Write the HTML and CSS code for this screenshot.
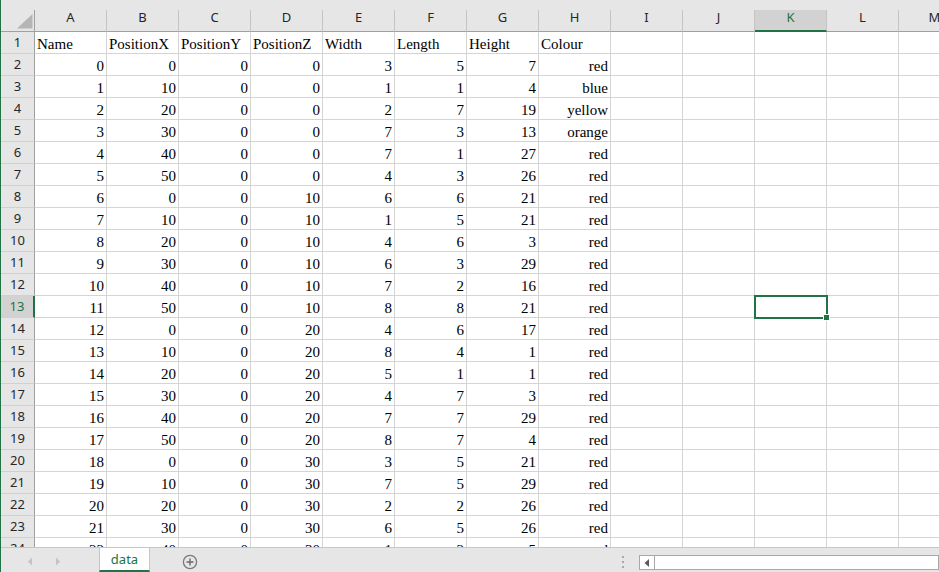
FILE: index.html
```html
<!DOCTYPE html>
<html>
<head>
<meta charset="utf-8">
<title>data</title>
<link rel="stylesheet" href="styles.css">
</head>
<body>
<div class="app">
  <div class="sheet">
    <div class="grid">
      <div class="corner"><svg width="33" height="21" viewBox="0 0 33 21"><polygon points="31.5,4 31.5,18.5 16,18.5" fill="#b5b5b5"/></svg></div>
      <div class="ch">A</div><div class="ch">B</div><div class="ch">C</div><div class="ch">D</div><div class="ch">E</div><div class="ch">F</div><div class="ch">G</div><div class="ch">H</div><div class="ch">I</div><div class="ch">J</div><div class="ch on">K</div><div class="ch">L</div><div class="ch">M</div>

      <div class="rh">1</div><div class="c">Name</div><div class="c">PositionX</div><div class="c">PositionY</div><div class="c">PositionZ</div><div class="c">Width</div><div class="c">Length</div><div class="c">Height</div><div class="c">Colour</div><div class="c"></div><div class="c"></div><div class="c"></div><div class="c"></div><div class="c"></div>
      <div class="rh">2</div><div class="c n">0</div><div class="c n">0</div><div class="c n">0</div><div class="c n">0</div><div class="c n">3</div><div class="c n">5</div><div class="c n">7</div><div class="c n">red</div><div class="c"></div><div class="c"></div><div class="c"></div><div class="c"></div><div class="c"></div>
      <div class="rh">3</div><div class="c n">1</div><div class="c n">10</div><div class="c n">0</div><div class="c n">0</div><div class="c n">1</div><div class="c n">1</div><div class="c n">4</div><div class="c n">blue</div><div class="c"></div><div class="c"></div><div class="c"></div><div class="c"></div><div class="c"></div>
      <div class="rh">4</div><div class="c n">2</div><div class="c n">20</div><div class="c n">0</div><div class="c n">0</div><div class="c n">2</div><div class="c n">7</div><div class="c n">19</div><div class="c n">yellow</div><div class="c"></div><div class="c"></div><div class="c"></div><div class="c"></div><div class="c"></div>
      <div class="rh">5</div><div class="c n">3</div><div class="c n">30</div><div class="c n">0</div><div class="c n">0</div><div class="c n">7</div><div class="c n">3</div><div class="c n">13</div><div class="c n">orange</div><div class="c"></div><div class="c"></div><div class="c"></div><div class="c"></div><div class="c"></div>
      <div class="rh">6</div><div class="c n">4</div><div class="c n">40</div><div class="c n">0</div><div class="c n">0</div><div class="c n">7</div><div class="c n">1</div><div class="c n">27</div><div class="c n">red</div><div class="c"></div><div class="c"></div><div class="c"></div><div class="c"></div><div class="c"></div>
      <div class="rh">7</div><div class="c n">5</div><div class="c n">50</div><div class="c n">0</div><div class="c n">0</div><div class="c n">4</div><div class="c n">3</div><div class="c n">26</div><div class="c n">red</div><div class="c"></div><div class="c"></div><div class="c"></div><div class="c"></div><div class="c"></div>
      <div class="rh">8</div><div class="c n">6</div><div class="c n">0</div><div class="c n">0</div><div class="c n">10</div><div class="c n">6</div><div class="c n">6</div><div class="c n">21</div><div class="c n">red</div><div class="c"></div><div class="c"></div><div class="c"></div><div class="c"></div><div class="c"></div>
      <div class="rh">9</div><div class="c n">7</div><div class="c n">10</div><div class="c n">0</div><div class="c n">10</div><div class="c n">1</div><div class="c n">5</div><div class="c n">21</div><div class="c n">red</div><div class="c"></div><div class="c"></div><div class="c"></div><div class="c"></div><div class="c"></div>
      <div class="rh">10</div><div class="c n">8</div><div class="c n">20</div><div class="c n">0</div><div class="c n">10</div><div class="c n">4</div><div class="c n">6</div><div class="c n">3</div><div class="c n">red</div><div class="c"></div><div class="c"></div><div class="c"></div><div class="c"></div><div class="c"></div>
      <div class="rh">11</div><div class="c n">9</div><div class="c n">30</div><div class="c n">0</div><div class="c n">10</div><div class="c n">6</div><div class="c n">3</div><div class="c n">29</div><div class="c n">red</div><div class="c"></div><div class="c"></div><div class="c"></div><div class="c"></div><div class="c"></div>
      <div class="rh">12</div><div class="c n">10</div><div class="c n">40</div><div class="c n">0</div><div class="c n">10</div><div class="c n">7</div><div class="c n">2</div><div class="c n">16</div><div class="c n">red</div><div class="c"></div><div class="c"></div><div class="c"></div><div class="c"></div><div class="c"></div>
      <div class="rh on">13</div><div class="c n">11</div><div class="c n">50</div><div class="c n">0</div><div class="c n">10</div><div class="c n">8</div><div class="c n">8</div><div class="c n">21</div><div class="c n">red</div><div class="c"></div><div class="c"></div><div class="c sel"><div class="selbox"></div><div class="handle"></div></div><div class="c"></div><div class="c"></div>
      <div class="rh">14</div><div class="c n">12</div><div class="c n">0</div><div class="c n">0</div><div class="c n">20</div><div class="c n">4</div><div class="c n">6</div><div class="c n">17</div><div class="c n">red</div><div class="c"></div><div class="c"></div><div class="c"></div><div class="c"></div><div class="c"></div>
      <div class="rh">15</div><div class="c n">13</div><div class="c n">10</div><div class="c n">0</div><div class="c n">20</div><div class="c n">8</div><div class="c n">4</div><div class="c n">1</div><div class="c n">red</div><div class="c"></div><div class="c"></div><div class="c"></div><div class="c"></div><div class="c"></div>
      <div class="rh">16</div><div class="c n">14</div><div class="c n">20</div><div class="c n">0</div><div class="c n">20</div><div class="c n">5</div><div class="c n">1</div><div class="c n">1</div><div class="c n">red</div><div class="c"></div><div class="c"></div><div class="c"></div><div class="c"></div><div class="c"></div>
      <div class="rh">17</div><div class="c n">15</div><div class="c n">30</div><div class="c n">0</div><div class="c n">20</div><div class="c n">4</div><div class="c n">7</div><div class="c n">3</div><div class="c n">red</div><div class="c"></div><div class="c"></div><div class="c"></div><div class="c"></div><div class="c"></div>
      <div class="rh">18</div><div class="c n">16</div><div class="c n">40</div><div class="c n">0</div><div class="c n">20</div><div class="c n">7</div><div class="c n">7</div><div class="c n">29</div><div class="c n">red</div><div class="c"></div><div class="c"></div><div class="c"></div><div class="c"></div><div class="c"></div>
      <div class="rh">19</div><div class="c n">17</div><div class="c n">50</div><div class="c n">0</div><div class="c n">20</div><div class="c n">8</div><div class="c n">7</div><div class="c n">4</div><div class="c n">red</div><div class="c"></div><div class="c"></div><div class="c"></div><div class="c"></div><div class="c"></div>
      <div class="rh">20</div><div class="c n">18</div><div class="c n">0</div><div class="c n">0</div><div class="c n">30</div><div class="c n">3</div><div class="c n">5</div><div class="c n">21</div><div class="c n">red</div><div class="c"></div><div class="c"></div><div class="c"></div><div class="c"></div><div class="c"></div>
      <div class="rh">21</div><div class="c n">19</div><div class="c n">10</div><div class="c n">0</div><div class="c n">30</div><div class="c n">7</div><div class="c n">5</div><div class="c n">29</div><div class="c n">red</div><div class="c"></div><div class="c"></div><div class="c"></div><div class="c"></div><div class="c"></div>
      <div class="rh">22</div><div class="c n">20</div><div class="c n">20</div><div class="c n">0</div><div class="c n">30</div><div class="c n">2</div><div class="c n">2</div><div class="c n">26</div><div class="c n">red</div><div class="c"></div><div class="c"></div><div class="c"></div><div class="c"></div><div class="c"></div>
      <div class="rh">23</div><div class="c n">21</div><div class="c n">30</div><div class="c n">0</div><div class="c n">30</div><div class="c n">6</div><div class="c n">5</div><div class="c n">26</div><div class="c n">red</div><div class="c"></div><div class="c"></div><div class="c"></div><div class="c"></div><div class="c"></div>
      <div class="rh">24</div><div class="c n">22</div><div class="c n">40</div><div class="c n">0</div><div class="c n">30</div><div class="c n">1</div><div class="c n">2</div><div class="c n">5</div><div class="c n">red</div><div class="c"></div><div class="c"></div><div class="c"></div><div class="c"></div><div class="c"></div>
    </div>
  </div>

  <div class="tabbar">
    <div class="nav">
      <svg class="arrow" width="6" height="9" viewBox="0 0 6 9"><polygon points="5,0.5 5,8.5 1,4.5" fill="#c3c3c3"/></svg>
      <svg class="arrow" width="6" height="9" viewBox="0 0 6 9"><polygon points="1,0.5 1,8.5 5,4.5" fill="#c3c3c3"/></svg>
    </div>
    <div class="tab">data</div>
    <svg class="plus" width="16" height="16" viewBox="0 0 16 16"><circle cx="8" cy="8" r="6.6" fill="none" stroke="#7a7a7a" stroke-width="1.3"/><path d="M8 4.5V11.5M4.5 8H11.5" stroke="#6a6a6a" stroke-width="1.4"/></svg>
    <div class="dots"><span></span><span></span><span></span></div>
    <div class="hscroll">
      <div class="hbtn"><svg width="6" height="8" viewBox="0 0 6 8"><polygon points="5,0 5,8 0.5,4" fill="#5a5a5a"/></svg></div>
    </div>
  </div>
</div>
</body>
</html>
```

FILE: styles.css
```css
* {
  box-sizing: border-box;
}

html, body {
  margin: 0;
  padding: 0;
}

body {
  width: 939px;
  height: 572px;
  overflow: hidden;
  background: #e6e6e6;
}

.app {
  height: 572px;
  border-left: 1px solid #217346;
  display: flex;
  flex-direction: column;
  overflow: hidden;
}

.sheet {
  height: 547px;
  flex-shrink: 0;
  padding-top: 10px;
  overflow: hidden;
  background: #e6e6e6;
}

.grid {
  display: grid;
  grid-template-columns: 34px repeat(13, 72px);
  grid-auto-rows: 22px;
  background: #ffffff;
  width: 970px;
}

.corner {
  background: #e6e6e6;
  border-right: 1px solid #a0a0a0;
  border-bottom: 1px solid #a0a0a0;
}

.corner svg {
  display: block;
}

.ch {
  background: #e6e6e6;
  border-right: 1px solid #c4c4c4;
  border-bottom: 1px solid #a0a0a0;
  font-family: "Noto Sans", "Liberation Sans", sans-serif;
  font-size: 13px;
  line-height: 14px;
  text-align: center;
  color: #262626;
}

.ch.on {
  background: #d2d2d2;
  color: #217346;
  border-bottom: 2px solid #217346;
}

.rh {
  background: #e6e6e6;
  border-right: 1px solid #a0a0a0;
  border-bottom: 1px solid #d0d0d0;
  font-family: "Noto Sans", "Liberation Sans", sans-serif;
  font-size: 13px;
  line-height: 21px;
  text-align: center;
  color: #262626;
}

.rh.on {
  background: #d2d2d2;
  color: #217346;
  border-right: 2px solid #217346;
}

.c {
  border-right: 1px solid #d4d4d4;
  border-bottom: 1px solid #d4d4d4;
  font-family: "Liberation Serif", serif;
  font-size: 15px;
  line-height: 18px;
  padding: 3px 2px 0 2px;
  white-space: nowrap;
  overflow: hidden;
  color: #000000;
}

.n {
  text-align: right;
}

.sel {
  position: relative;
  overflow: visible;
}

.selbox {
  position: absolute;
  left: -1px;
  top: -1px;
  width: 74px;
  height: 24px;
  border: 2px solid #217346;
}

.handle {
  position: absolute;
  left: 68px;
  top: 18px;
  width: 7px;
  height: 7px;
  background: #217346;
  border: 1px solid #ffffff;
}

.tabbar {
  height: 25px;
  flex-shrink: 0;
  border-top: 1px solid #c6c6c6;
  display: flex;
  align-items: flex-start;
  background: #e6e6e6;
  overflow: hidden;
}

.nav {
  width: 100px;
  height: 24px;
  display: flex;
  align-items: center;
  padding-left: 26px;
  gap: 22px;
  padding-top: 2px;
}

.arrow {
  display: block;
}

.tab {
  width: 51px;
  height: 25px;
  margin-top: -1px;
  flex-shrink: 0;
  background: #ffffff;
  border-left: 1px solid #c6c6c6;
  border-right: 1px solid #c6c6c6;
  border-bottom: 2px solid #217346;
  font-family: "Noto Sans", "Liberation Sans", sans-serif;
  font-size: 13px;
  line-height: 21px;
  padding-top: 2px;
  text-align: center;
  color: #217346;
}

.plus {
  display: block;
  flex-shrink: 0;
  margin-left: 32px;
  margin-top: 6px;
}

.dots {
  margin-left: 424px;
  margin-top: 8px;
  width: 3px;
  display: flex;
  flex-direction: column;
  gap: 3px;
  flex-shrink: 0;
}

.dots span {
  display: block;
  width: 2px;
  height: 2px;
  background: #a8a8a8;
}

.hscroll {
  margin-left: 14px;
  margin-top: 7px;
  width: 300px;
  height: 15px;
  flex-shrink: 0;
  background: #ffffff;
  border: 1px solid #a8a8a8;
  display: flex;
}

.hbtn {
  width: 15px;
  height: 13px;
  border-right: 1px solid #a8a8a8;
  display: flex;
  align-items: center;
  justify-content: center;
}

.hbtn svg {
  display: block;
}
```
